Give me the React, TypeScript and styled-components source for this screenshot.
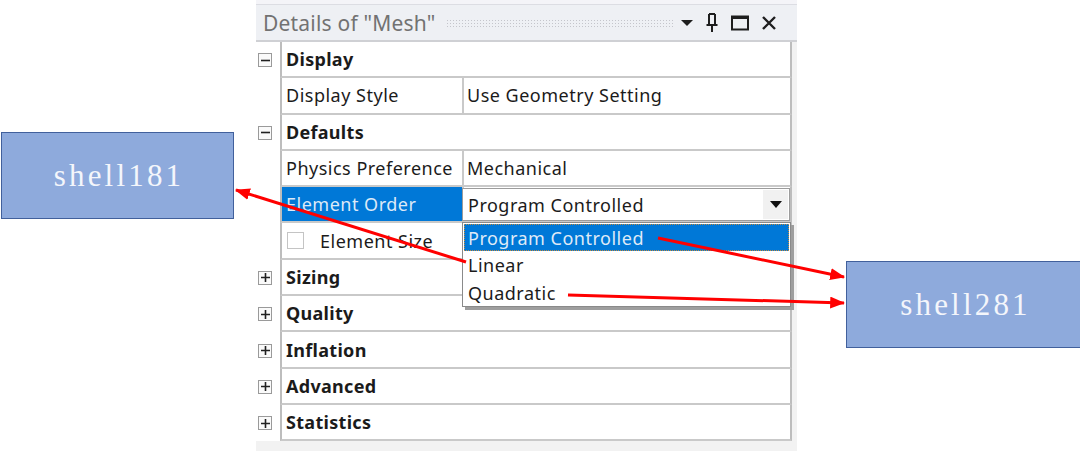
import React from "react";
import styled, { createGlobalStyle } from "styled-components";

const GlobalStyle = createGlobalStyle`
  html, body {
    margin: 0;
    padding: 0;
    background: #ffffff;
  }
  body {
    font-family: "Noto Sans", "Open Sans", sans-serif;
  }
`;

type Item =
  | { kind: "group"; label: string; open: boolean }
  | { kind: "prop"; label: string; value?: string; check?: boolean; active?: boolean; combo?: boolean };

const rows: Item[] = [
  { kind: "group", label: "Display", open: true },
  { kind: "prop", label: "Display Style", value: "Use Geometry Setting" },
  { kind: "group", label: "Defaults", open: true },
  { kind: "prop", label: "Physics Preference", value: "Mechanical" },
  { kind: "prop", label: "Element Order", value: "Program Controlled", active: true, combo: true },
  { kind: "prop", label: "Element Size", check: true },
  { kind: "group", label: "Sizing", open: false },
  { kind: "group", label: "Quality", open: false },
  { kind: "group", label: "Inflation", open: false },
  { kind: "group", label: "Advanced", open: false },
  { kind: "group", label: "Statistics", open: false },
];

const options = ["Program Controlled", "Linear", "Quadratic"];

export default function App() {
  return (
    <>
      <GlobalStyle />
      <Page>
        <Callout $top={132} $left={1}>shell181</Callout>

        <Panel>
          <TopStrip />
          <TitleBar>
            <Title>Details of "Mesh"</Title>
            <Grip />
            <TitleIcons>
              <svg width="12" height="8" viewBox="0 0 12 8">
                <path d="M0 1 L12 1 L6 7 Z" fill="#1e1e1e" />
              </svg>
              <svg width="14" height="20" viewBox="0 0 14 20">
                <path d="M4 1 V12 M10 1 V12 M4 1 H10 M1.5 12 H12.5 M7 12 V19" stroke="#1e1e1e" strokeWidth="2" fill="none" />
              </svg>
              <svg width="18" height="16" viewBox="0 0 18 16">
                <rect x="1" y="1.5" width="16" height="13" stroke="#1e1e1e" strokeWidth="2" fill="none" />
                <path d="M1 3 H17" stroke="#1e1e1e" strokeWidth="2" />
              </svg>
              <svg width="16" height="16" viewBox="0 0 16 16">
                <path d="M2 2 L14 14 M14 2 L2 14" stroke="#1e1e1e" strokeWidth="2.4" />
              </svg>
            </TitleIcons>
          </TitleBar>

          <Tree>
            {rows.map((r) => (
              <Row key={r.label}>
                <Gutter>
                  {r.kind === "group" && (
                    <Toggle>
                      <svg width="9" height="9" viewBox="0 0 9 9">
                        <path d={r.open ? "M0 4.5 H9" : "M0 4.5 H9 M4.5 0 V9"} stroke="#202020" strokeWidth="1.6" />
                      </svg>
                    </Toggle>
                  )}
                </Gutter>
                {r.kind === "group" ? (
                  <Body $group>
                    <GroupCell>{r.label}</GroupCell>
                  </Body>
                ) : (
                  <Body>
                    <LabelCell $active={r.active}>
                      {r.check && <Check />}
                      <span>{r.label}</span>
                    </LabelCell>
                    <ValueCell>
                      {r.combo ? (
                        <>
                          <Combo>
                            <ComboText>{r.value}</ComboText>
                            <ComboButton>
                              <svg width="12" height="7" viewBox="0 0 12 7">
                                <path d="M0 0 H12 L6 7 Z" fill="#111" />
                              </svg>
                            </ComboButton>
                          </Combo>
                          <DropList>
                            {options.map((o, i) => (
                              <DropItem key={o} $selected={i === 0}>
                                {o}
                              </DropItem>
                            ))}
                          </DropList>
                        </>
                      ) : (
                        r.value
                      )}
                    </ValueCell>
                  </Body>
                )}
              </Row>
            ))}
          </Tree>
        </Panel>

        <Callout $top={261} $left={49} $wide>
          shell281
        </Callout>

        <Arrows width="1080" height="451" viewBox="0 0 1080 451">
          <defs>
            <marker id="head" markerWidth="5" markerHeight="4" refX="4.6" refY="2" orient="auto" markerUnits="strokeWidth">
              <path d="M0 0 L5 2 L0 4 Z" fill="#ff0000" />
            </marker>
          </defs>
          <line x1="466" y1="262" x2="236" y2="190" stroke="#ff0000" strokeWidth="3" markerEnd="url(#head)" />
          <line x1="658" y1="238" x2="844" y2="277" stroke="#ff0000" strokeWidth="3" markerEnd="url(#head)" />
          <line x1="568" y1="295" x2="844" y2="303" stroke="#ff0000" strokeWidth="3" markerEnd="url(#head)" />
        </Arrows>
      </Page>
    </>
  );
}

const Page = styled.div`
  position: relative;
  width: 1080px;
  height: 451px;
  display: flex;
  align-items: flex-start;
  overflow: hidden;
`;

const Callout = styled.div<{ $top: number; $left: number; $wide?: boolean }>`
  box-sizing: border-box;
  margin-top: ${(p) => p.$top}px;
  margin-left: ${(p) => p.$left}px;
  width: ${(p) => (p.$wide ? 236 : 233)}px;
  height: 87px;
  flex-shrink: 0;
  background: #8eaadc;
  border: 1px solid #41609c;
  display: flex;
  align-items: center;
  justify-content: center;
  color: #f4f6fb;
  font-family: "Liberation Serif", "DejaVu Serif", serif;
  font-size: 31px;
  letter-spacing: 3.2px;
  padding-left: 3px;
`;

const Panel = styled.div`
  margin-left: 22px;
  width: 541px;
  height: 451px;
  flex-shrink: 0;
  background: #f2f2f2;
  display: flex;
  flex-direction: column;
`;

const TopStrip = styled.div`
  height: 4px;
  background: #f4f4f8;
  border-bottom: 1px solid #dcdde3;
`;

const TitleBar = styled.div`
  height: 35px;
  background: #eef0f4;
  border-bottom: 2px solid #cfd0d4;
  display: flex;
  align-items: center;
  padding-left: 7px;
  padding-right: 20px;
`;

const Title = styled.div`
  font-size: 21px;
  letter-spacing: 0.2px;
  color: #727272;
  white-space: nowrap;
`;

const Grip = styled.div`
  flex: 1;
  height: 8px;
  margin: 0 7px 0 10px;
  background-image: radial-gradient(#c4c5cb 0.8px, transparent 0.9px);
  background-size: 3px 3px;
`;

const TitleIcons = styled.div`
  display: flex;
  align-items: center;
  gap: 12px;
`;

const Tree = styled.div`
  background: #ffffff;
  margin-right: 5px;
  display: flex;
  flex-direction: column;
`;

const Row = styled.div`
  display: grid;
  grid-template-columns: 24px 1fr;
  height: 36.3px;
`;

const Gutter = styled.div`
  display: flex;
  align-items: center;
  padding-left: 2px;
`;

const Toggle = styled.div`
  box-sizing: border-box;
  width: 14px;
  height: 14px;
  border: 1px solid #9a9a9a;
  background: #fafafa;
  display: flex;
  align-items: center;
  justify-content: center;
`;

const Body = styled.div<{ $group?: boolean }>`
  box-sizing: border-box;
  position: relative;
  display: grid;
  grid-template-columns: ${(p) => (p.$group ? "1fr" : "180px 1fr")};
  border-left: 2px solid #bdbdbd;
  border-right: 2px solid #bdbdbd;
  border-bottom: 2px solid #c9c9c9;
  font-size: 18px;
  letter-spacing: 0.5px;
  color: #1b1b1b;
`;

const GroupCell = styled.div`
  display: flex;
  align-items: center;
  padding-left: 4px;
  font-weight: 700;
  letter-spacing: 0.3px;
`;

const LabelCell = styled.div<{ $active?: boolean }>`
  display: flex;
  align-items: center;
  padding-left: 4px;
  gap: 16px;
  white-space: nowrap;
  overflow: hidden;
  background: ${(p) => (p.$active ? "#0078d7" : "transparent")};
  color: ${(p) => (p.$active ? "#dce9f7" : "inherit")};
`;

const Check = styled.span`
  box-sizing: border-box;
  width: 17px;
  height: 17px;
  margin-left: 1px;
  border: 1px solid #c4c4c4;
  background: #fff;
  flex-shrink: 0;
`;

const ValueCell = styled.div`
  position: relative;
  display: flex;
  align-items: center;
  padding-left: 3px;
  border-left: 2px solid #c9c9c9;
  white-space: nowrap;
`;

const Combo = styled.div`
  position: absolute;
  top: 1px;
  left: -2px;
  right: 0;
  bottom: 0;
  border: 1px solid #9c9c9c;
  background: #fff;
  display: flex;
  align-items: center;
`;

const ComboText = styled.div`
  flex: 1;
  padding-left: 5px;
`;

const ComboButton = styled.div`
  width: 25px;
  align-self: stretch;
  margin: 1px;
  background: #f1f1f1;
  display: flex;
  align-items: center;
  justify-content: center;
`;

const DropList = styled.div`
  position: absolute;
  top: calc(100% + 1px);
  left: -2px;
  right: -1px;
  height: 85px;
  box-sizing: border-box;
  background: #fff;
  border: 1px solid #8a8a8a;
  box-shadow: 3px 3px 0 #9e9e9e;
  padding: 1px;
  z-index: 2;
`;

const DropItem = styled.div<{ $selected?: boolean }>`
  box-sizing: border-box;
  height: ${(p) => (p.$selected ? 27 : 28)}px;
  display: flex;
  align-items: center;
  padding-left: 4px;
  background: ${(p) => (p.$selected ? "#0078d7" : "transparent")};
  color: ${(p) => (p.$selected ? "#dfeaf7" : "#1b1b1b")};
  outline: ${(p) => (p.$selected ? "1px dotted #c28a40" : "none")};
  outline-offset: -1px;
`;

const Arrows = styled.svg`
  position: absolute;
  left: 0;
  top: 0;
  pointer-events: none;
  z-index: 5;
`;
